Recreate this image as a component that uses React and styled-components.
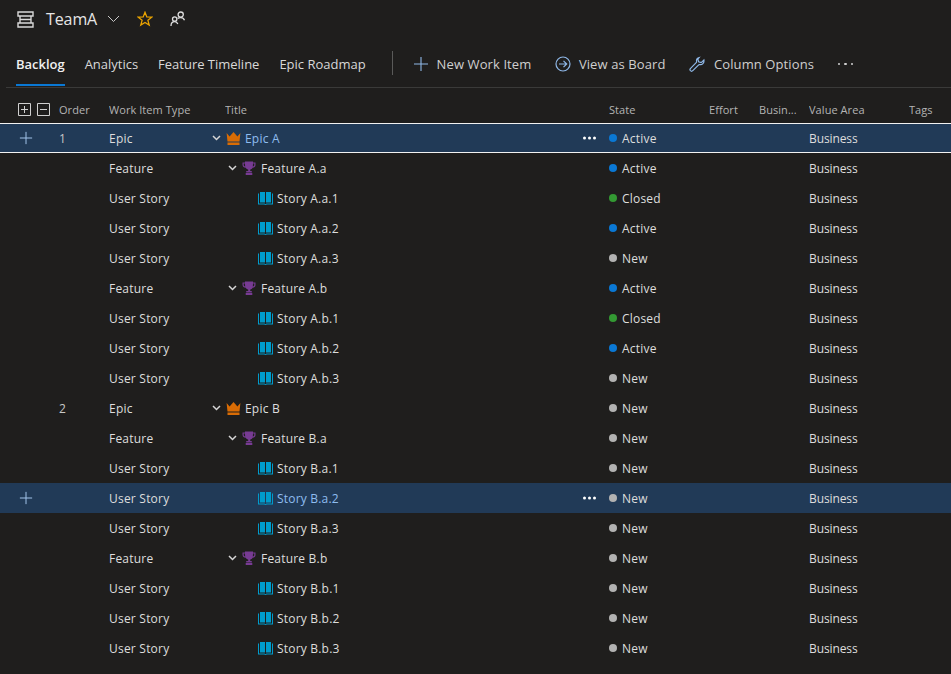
import React from 'react';
import styled, { createGlobalStyle } from 'styled-components';

const Global = createGlobalStyle`
  html, body { margin: 0; padding: 0; background: #1f1e1d; }
  body { font-family: "Open Sans", "Noto Sans", sans-serif; color: #e3e3e3; overflow: hidden; }
`;
const Page = styled.div`width: 951px; height: 674px; overflow: hidden; background: #1f1e1d;`;
const TeamBar = styled.div`display: flex; align-items: center; height: 38px; padding-left: 17px;`;
const TeamName = styled.span`font-size: 16px; letter-spacing: -0.1px; color: #e6e6e6; margin-left: 12px; margin-right: 10px;`;
const IconSlot = styled.span`display: inline-flex; margin-left: ${p => p.$ml || 0}px;`;
const TabBar = styled.div`
  display: flex; align-items: stretch; height: 49px; margin-left: 6px; border-bottom: 1px solid #3a3a39; padding-left: 10px;
`;
const Tab = styled.div`
  display: flex; align-items: center; height: 48px; font-size: 13px; letter-spacing: ${p => p.$active ? '-0.02px' : '-0.01px'}; margin-right: 20px; color: ${p => p.$active ? '#f0f0f0' : '#d8d8d8'}; font-weight: ${p => p.$active ? 600 : 400};
  border-bottom: 2px solid ${p => p.$active ? '#0a78d4' : 'transparent'}; box-sizing: border-box; padding-top: 5px;
`;
const Divider = styled.div`width: 1px; height: 24px; background: #5a5a59; align-self: center; margin: 0 20px 0 6px;`;
const Action = styled.div`display: flex; align-items: center; gap: 8px; font-size: 13px; letter-spacing: 0.1px; color: #cfcfcf; margin-right: 23.5px; padding-top: 3px;`;
const Dots = styled.span`display: flex; gap: 4px; align-items: center; padding-top: 3px;`;
const Dot = styled.i`width: 2.5px; height: 2.5px; background: #d0d0d0; display: block; border-radius: 50%;`;
const MoreDot = styled.i`width: 3px; height: 3px; background: #fff; display: block; border-radius: 50%;`;
const columns = '59px 50px 116px 384px 100px 50px 50px 100px 42px';
const HeadRow = styled.div`
  display: grid; grid-template-columns: ${columns}; height: 35px; align-items: center; font-size: 11px; letter-spacing: 0.06px; color: #b4b4b4; box-sizing: border-box; padding-top: 7px;
`;
const HeadIcons = styled.div`display: flex; gap: 6px; padding-left: 18px;`;
const Cell = styled.div`white-space: nowrap; overflow: hidden;`;
const OrderCell = styled(Cell)`color: #c8c8c8;`;
const TypeCell = styled(Cell)`letter-spacing: 0.22px;`;
const AreaCell = styled(Cell)`letter-spacing: -0.1px;`;
const Row = styled.div`
  display: grid; grid-template-columns: ${columns}; align-items: center; height: 30px; font-size: 12px; color: #dedede; position: relative; box-sizing: border-box;
  background: ${p => p.$hl ? '#213a57' : 'transparent'};
  ${p => p.$focus ? 'box-shadow: inset 0 1px 0 #f2f2f2, inset 0 -1px 0 #f2f2f2;' : ''}
`;
const AddCell = styled.div`padding-left: 19px; display: flex; align-items: center;`;
const TitleCell = styled.div`display: flex; align-items: center; padding-left: ${p => p.$indent}px; position: relative; color: ${p => p.$hl ? '#8fbdf0' : '#dedede'}; letter-spacing: 0.2px;`;
const Chevron = styled.span`display: inline-flex; width: 16px; margin-left: -17px; margin-right: 1px; justify-content: center;`;
const WorkIcon = styled.span`display: inline-flex; width: 16px; margin-right: 4px; justify-content: center;`;
const More = styled.span`position: absolute; right: 13px; top: 50%; transform: translateY(-50%); display: flex; gap: 2px;`;
const StateCell = styled.div`display: flex; align-items: center; gap: 5px; letter-spacing: 0.2px;`;
const StateDot = styled.span`width: 8px; height: 8px; border-radius: 50%; background: ${p => p.$c}; margin-top: -1px;`;

const stroke = { fill: 'none', stroke: 'currentColor' };
const Crown = () => <svg width="15" height="13" viewBox="0 0 15 13"><path fill="#d96c05" d="M.6 1l3 3.6L7.5 0l3.9 4.6 3-3.6-.9 8.6H1.5zM1.5 10.6h12V13h-12z"/></svg>;
const Trophy = () => <svg width="14" height="14" viewBox="0 0 14 14"><path fill="#773b93" d="M3 .5h8v1h2.5v2.2c0 1.8-1.2 3-2.9 3.1-.6 1-1.3 1.6-2.4 1.9V10h1.6v1.4H4.2V10h2V8.7c-1.1-.3-1.8-.9-2.4-1.9C2 6.7.5 5.5.5 3.7V1.5H3zM1.7 2.6v1.1c0 .9.5 1.6 1.5 1.8-.1-.8-.2-1.8-.2-2.9zm10.6 0H11c0 1.1-.1 2.1-.2 2.9 1-.2 1.5-.9 1.5-1.8zM3.7 12h6.6v2H3.7z"/></svg>;
const Book = () => <svg width="15" height="13" viewBox="0 0 15 13"><path fill="#009ccc" d="M2 0h5v10.5H2zM8 0h5v10.5H8zM0 1.5h1V11.5h5.6l.9.7.9-.7H14V1.5h1V12.5H8.6l-.6.5H7l-.6-.5H0z"/></svg>;
const ChevDown = () => <svg width="9" height="6" viewBox="0 0 9 6"><path d="M1 1l3.5 3.5L8 1" fill="none" stroke="#d6d6d6" strokeWidth="1.5"/></svg>;
const Plus = ({ c = '#8fb8e8', s = 16 }) => <svg width={s} height={s} viewBox="0 0 16 16"><path d="M8 1v14M1 8h14" fill="none" stroke={c} strokeWidth="1.1"/></svg>;

const data = [
  ['1','Epic',0,'Epic A','Active',{hl:1,focus:1}],
  ['','Feature',1,'Feature A.a','Active'],
  ['','User Story',2,'Story A.a.1','Closed'],
  ['','User Story',2,'Story A.a.2','Active'],
  ['','User Story',2,'Story A.a.3','New'],
  ['','Feature',1,'Feature A.b','Active'],
  ['','User Story',2,'Story A.b.1','Closed'],
  ['','User Story',2,'Story A.b.2','Active'],
  ['','User Story',2,'Story A.b.3','New'],
  ['2','Epic',0,'Epic B','New'],
  ['','Feature',1,'Feature B.a','New'],
  ['','User Story',2,'Story B.a.1','New'],
  ['','User Story',2,'Story B.a.2','New',{hl:1}],
  ['','User Story',2,'Story B.a.3','New'],
  ['','Feature',1,'Feature B.b','New'],
  ['','User Story',2,'Story B.b.1','New'],
  ['','User Story',2,'Story B.b.2','New'],
  ['','User Story',2,'Story B.b.3','New'],
];
const stateColor = { Active: '#0a78d4', Closed: '#339933', New: '#b2b2b2' };

export default function App() {
  return (
    <Page>
      <Global />
      <TeamBar>
        <svg width="17" height="17" viewBox="0 0 17 17" style={{ color: '#d8d8d8' }}>
          <path d="M1 1h15v4H1zM1 12h15v4H1zM3 5v7M14 5v7M3 8.5h11" {...stroke} strokeWidth="1.4"/>
        </svg>
        <TeamName>TeamA</TeamName>
        <svg width="13" height="8" viewBox="0 0 13 8"><path d="M1 1l5.5 5.5L12 1" fill="none" stroke="#c8c8c8" strokeWidth="1"/></svg>
        <IconSlot $ml={17}><svg width="16" height="16" viewBox="0 0 16 16"><path d="M8 1.3l1.8 4.6 5 .3-3.9 3.1 1.3 4.8L8 11.4l-4.2 2.7 1.3-4.8L1.2 6.2l5-.3z" fill="none" stroke="#eaa300" strokeWidth="1.3"/></svg></IconSlot>
        <IconSlot $ml={17}><svg width="16" height="16" viewBox="0 0 16 16" style={{ color: '#dedede' }}><circle cx="10.7" cy="3.6" r="2.6" {...stroke} strokeWidth="1.3"/><circle cx="4.7" cy="8" r="2.2" {...stroke} strokeWidth="1.3"/><path d="M1 15c0-2.5 1.5-4.4 3.7-4.4 1.4 0 2.5.7 3.1 2.4M7.7 7.4c.7-.5 1.6-.8 3-.8 1.8 0 3.2.9 3.8 2.6" {...stroke} strokeWidth="1.3"/></svg></IconSlot>
      </TeamBar>
      <TabBar>
        <Tab $active>Backlog</Tab>
        <Tab>Analytics</Tab>
        <Tab>Feature Timeline</Tab>
        <Tab>Epic Roadmap</Tab>
        <Divider />
        <Action><Plus /> New Work Item</Action>
        <Action>
          <svg width="16" height="16" viewBox="0 0 16 16" style={{ color: '#8fb8e8' }}><circle cx="8" cy="8" r="7" {...stroke} strokeWidth="1.2"/><path d="M4 8h7.5M8.5 4.8L11.7 8l-3.2 3.2" {...stroke} strokeWidth="1.2"/></svg>
          View as Board
        </Action>
        <Action>
          <svg width="17" height="17" viewBox="0 0 17 17" style={{ color: '#8fb8e8' }}><path d="M10.2 1.5c-1.7.4-2.9 2-2.6 3.9.1.5.1.7-.2 1L1.6 12.3c-.8.8-.8 1.7-.2 2.4.7.7 1.7.7 2.4 0l5.9-5.9c.3-.3.6-.3 1-.2 2.4.5 4.7-1.5 4.2-4.6l-2.7 2.6-2.6-.8-.7-2.6z" {...stroke} strokeWidth="1.2"/></svg>
          Column Options
        </Action>
        <Dots><Dot /><Dot /><Dot /></Dots>
      </TabBar>
      <HeadRow>
        <HeadIcons>
          <svg width="13" height="13" viewBox="0 0 13 13" style={{ color: '#d0d0d0' }}><path d="M.5.5h12v12H.5zM3 6.5h7M6.5 3v7" {...stroke}/></svg>
          <svg width="13" height="13" viewBox="0 0 13 13" style={{ color: '#d0d0d0' }}><path d="M.5.5h12v12H.5zM3 6.5h7" {...stroke}/></svg>
        </HeadIcons>
        <Cell>Order</Cell><Cell>Work Item Type</Cell><Cell>Title</Cell><Cell>State</Cell><Cell>Effort</Cell><Cell>Busin...</Cell><Cell>Value Area</Cell><Cell>Tags</Cell>
      </HeadRow>
      {data.map(([order, type, level, title, state, opt = {}]) => (
        <Row key={title} $hl={opt.hl} $focus={opt.focus}>
          <AddCell>{opt.hl ? <Plus c="#a6c8ee" s={14} /> : null}</AddCell>
          <OrderCell>{order}</OrderCell>
          <TypeCell>{type}</TypeCell>
          <TitleCell $indent={level * 16} $hl={opt.hl}>
            {level < 2 ? <Chevron><ChevDown /></Chevron> : null}
            <WorkIcon>{level === 0 ? <Crown /> : level === 1 ? <Trophy /> : <Book />}</WorkIcon>
            {title}
            {opt.hl ? <More><MoreDot /><MoreDot /><MoreDot /></More> : null}
          </TitleCell>
          <StateCell><StateDot $c={stateColor[state]} />{state}</StateCell>
          <Cell /><Cell />
          <AreaCell>Business</AreaCell>
          <Cell />
        </Row>
      ))}
    </Page>
  );
}
